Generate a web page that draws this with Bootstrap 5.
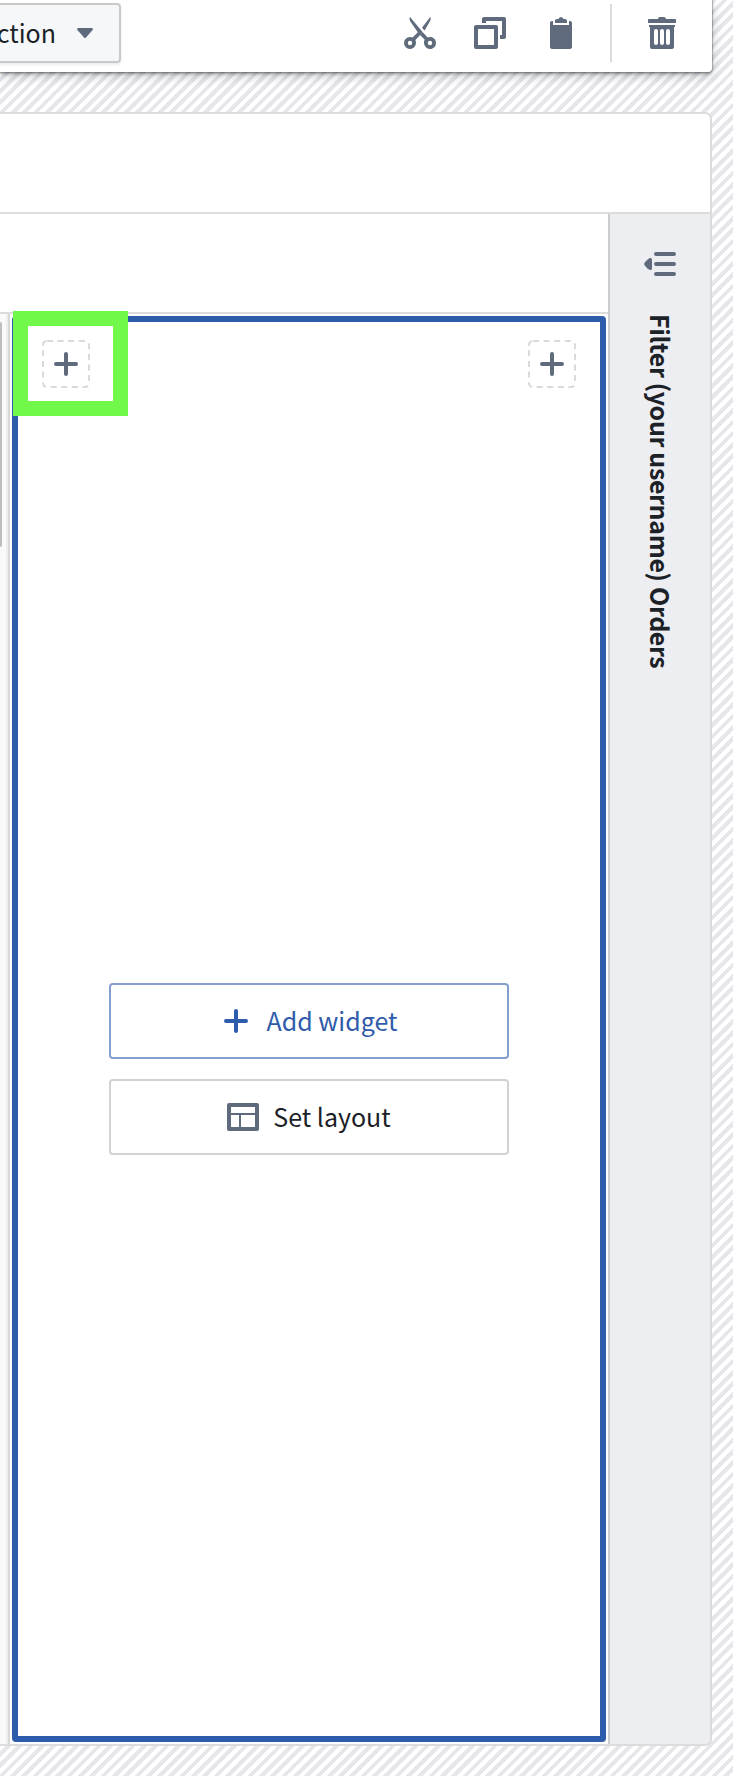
<!DOCTYPE html>
<html lang="en">
<head>
<meta charset="utf-8">
<meta name="viewport" content="width=device-width, initial-scale=1">
<title>Section editor</title>
<link href="https://cdn.jsdelivr.net/npm/bootstrap@5.3.0/dist/css/bootstrap.min.css" rel="stylesheet">
<style>
  :root { --ink: #1c2127; --icon: #5f6b7c; --line: #dcdcdd; --accent: #2f5bab; }
  body { font-family: "Noto Sans CJK JP", "Noto Sans", sans-serif; font-size: 25px; line-height: 36px; color: var(--ink); overflow: hidden; }
  svg { display: block; flex: none; fill: currentColor; }
  .workspace { height: 1776px; background: repeating-linear-gradient(135deg, #e5e7eb 0 2.6px, #fff 2.6px 6.6px, #e5e7eb 6.6px 8px); }
  .toolbar { width: 712px; height: 72px; padding-top: 3px; border-radius: 0 0 4px 0; color: var(--icon);
    box-shadow: 0 0 0 1px rgba(17,20,24,.18), 0 2px 3px rgba(17,20,24,.35), 0 4px 12px rgba(17,20,24,.2); }
  .btn { --bs-btn-font-size: 25px; --bs-btn-line-height: 36px; --bs-btn-border-width: 2px; --bs-btn-border-radius: 4px; --bs-btn-color: var(--ink); }
  .btn span { margin-top: -2px; }
  .section-btn { width: 125px; height: 60px; margin-left: -4px; padding: 0 26px 0 0; gap: 21px; background: #f6f7f9; border-color: #c8c9cb; box-shadow: 0 2px 3px rgba(17,20,24,.08); }
  .tools { padding: 14px 34px 0 0; }
  .rule { width: 2px; height: 58px; margin: -13px 34px 0 33px; background: var(--line); }
  .canvas { width: 712px; height: 1634px; margin-top: 40px; border: 2px solid var(--line); border-left: 0; border-radius: 0 7px 7px 0; }
  .page-head { height: 100px; border-bottom: 2px solid var(--line); }
  .sub-head { height: 100px; border-bottom: 2px solid var(--line); }
  .main-col { width: 608px; }
  .side-col { width: 102px; border-left: 2px solid #caccd0; background: #edeef2; padding-top: 38px; color: var(--icon); }
  .side-title { writing-mode: vertical-rl; font-weight: 700; color: var(--ink); margin: 38px 0 0 2px; white-space: nowrap; letter-spacing: -.36px; }
  .prev-col { width: 10px; background: #fafafa; border-right: 2px solid #d8d8d8; box-shadow: inset -2px 0 #eee; padding-top: 8px; }
  .prev-card { width: 2px; height: 225px; background: #bdbdbd; border-radius: 0 2px 2px 0; }
  .selection { width: 594px; height: 1426px; margin: 2px 0 0 2px; border: 6px solid var(--accent); border-radius: 4px; }
  .slots { padding: 18px 24px 0; }
  .slot { width: 48px; height: 48px; color: var(--icon); }
  .slot-line { fill: none; stroke: #dadada; stroke-width: 2; stroke-dasharray: 6 4.6; }
  .highlight { top: -11px; left: -5px; width: 115px; height: 105px; border: 15px solid #72f74b; }
  .choices { padding: 595px 0 0 91px; gap: 20px; }
  .choice { width: 400px; height: 76px; padding: 0; gap: 14px; border-color: #d1d2d3; }
  .choice-main { --bs-btn-color: var(--accent); border-color: #849ed0; }
</style>
</head>
<body>
<div class="workspace">
  <header class="toolbar bg-white position-relative d-flex justify-content-between align-items-start">
    <button class="btn section-btn d-flex align-items-center justify-content-end" type="button">
      <span>ction</span>
      <svg class="caret" width="16" height="10" viewBox="0 0 16 10" style="color:#5f6b7c"><path d="M1 0h14q1.500.8.600 2L9 9.500q-1 1-2 0L.4 2Q-.5.8 1 0z"/></svg>
    </button>
    <div class="tools d-flex align-items-start">
      <svg width="32" height="32" viewBox="0 0 16 16"><path fill-rule="evenodd" d="M13 10c-.4 0-.8.1-1.200.3L9.300 7.500 8 9l2.300 2.300c-.2.500-.3.900-.3 1.500 0 1.700 1.300 3.200 3 3.200s3-1.300 3-3-1.300-3-3-3zm0 4.100a1.100 1.100 0 1 1 0-2.200 1.100 1.100 0 0 1 0 2.200zM9.200 5.600l1.100 1.100 2.300-4C13.300 1.700 13.600.6 13.100 0L9 5.400zM3 0c-.5.6-.2 1.700.5 2.700l3.400 4.900-2.600 2.700C3.900 10.100 3.400 10 3 10a3 3 0 1 0 3 3c0-.6-.1-1-.3-1.500L8.100 9l1.100-1.600L3 0zm0 14.100a1.100 1.100 0 1 1 0-2.200 1.100 1.100 0 0 1 0 2.200z"/></svg>
      <svg width="32" height="32" viewBox="0 0 16 16" style="margin-left:38px"><path fill-rule="evenodd" d="M15 0H5c-.55 0-1 .45-1 1v2h2V2h8v7h-1v2h2c.55 0 1-.45 1-1V1c0-.55-.45-1-1-1zm-4 4H1c-.55 0-1 .45-1 1v10c0 .55.45 1 1 1h10c.55 0 1-.45 1-1V5c0-.55-.45-1-1-1zm-1 10H2V6h8v8z"/></svg>
      <svg width="32" height="32" viewBox="0 0 16 16" style="margin-left:39px"><path d="M11 2c0-.55-.45-1-1-1h-.78C8.980.400 8.400 0 8 0S7 .400 6.780 1H6c-.55 0-1 .45-1 1v1h6V2zM12.500 2H12v2H4V2h-.5c-.55 0-1 .45-1 1v12c0 .55.45 1 1 1h9c.55 0 1-.45 1-1V3c0-.55-.45-1-1-1z"/></svg>
      <div class="rule"></div>
      <svg width="32" height="32" viewBox="0 0 16 16"><path fill-rule="evenodd" d="M14.500 1H10c0-.55-.45-1-1-1H7c-.55 0-1 .45-1 1H1.500c-.3 0-.5.200-.5.500V3h14V1.500c0-.3-.2-.5-.5-.5zM1.500 4v1H2v10c0 .55.45 1 1 1h10c.55 0 1-.45 1-1V5h.5V4h-13zM6 13c0 .55-.45 1-1 1s-1-.45-1-1V7c0-.55.45-1 1-1s1 .45 1 1v6zm3 0c0 .55-.45 1-1 1s-1-.45-1-1V7c0-.55.45-1 1-1s1 .45 1 1v6zm3 0c0 .55-.45 1-1 1s-1-.45-1-1V7c0-.55.45-1 1-1s1 .45 1 1v6z"/></svg>
    </div>
  </header>

  <main class="canvas bg-white d-flex flex-column overflow-hidden">
    <div class="page-head flex-shrink-0"></div>
    <div class="d-flex flex-grow-1">
      <div class="main-col d-flex flex-column">
        <div class="sub-head flex-shrink-0"></div>
        <div class="d-flex flex-grow-1">
          <div class="prev-col"><div class="prev-card"></div></div>
          <section class="selection">
            <div class="slots d-flex justify-content-between position-relative">
              <svg class="slot" viewBox="0 0 48 48"><rect class="slot-line" x="1" y="1" width="46" height="46" rx="4"/><path d="M22 22v-8a2 2 0 0 1 4 0v8h8a2 2 0 0 1 0 4h-8v8a2 2 0 0 1-4 0v-8h-8a2 2 0 0 1 0-4z"/></svg>
              <svg class="slot" viewBox="0 0 48 48"><rect class="slot-line" x="1" y="1" width="46" height="46" rx="4"/><path d="M22 22v-8a2 2 0 0 1 4 0v8h8a2 2 0 0 1 0 4h-8v8a2 2 0 0 1-4 0v-8h-8a2 2 0 0 1 0-4z"/></svg>
              <div class="highlight position-absolute"></div>
            </div>
            <div class="choices d-flex flex-column">
              <button class="btn choice choice-main d-flex align-items-center justify-content-center" type="button">
                <svg width="32" height="32" viewBox="9 8 32 32"><path d="M22 22v-8a2 2 0 0 1 4 0v8h8a2 2 0 0 1 0 4h-8v8a2 2 0 0 1-4 0v-8h-8a2 2 0 0 1 0-4z"/></svg>
                <span>Add widget</span>
              </button>
              <button class="btn choice d-flex align-items-center justify-content-center" type="button">
                <svg width="32" height="28" viewBox="0 0 32 28" style="color:#5f6b7c"><path fill-rule="evenodd" d="M2 0h28q2 0 2 2v24q0 2-2 2H2q-2 0-2-2V2q0-2 2-2zm2 4v6h24V4zm0 8v12h8V12zm10 0v12h14V12z"/></svg>
                <span>Set layout</span>
              </button>
            </div>
          </section>
        </div>
      </div>
      <aside class="side-col d-flex flex-column align-items-center">
        <svg width="32" height="24" viewBox="0 0 32 24"><path d="M12 0h18a2 2 0 0 1 0 4H12a2 2 0 0 1 0-4zm0 10h18a2 2 0 0 1 0 4H12a2 2 0 0 1 0-4zm0 10h18a2 2 0 0 1 0 4H12a2 2 0 0 1 0-4zM8 7.500v9q0 1.800-2 1.500Q4 17.500.7 13.500q-1-1.500 0-3Q4 6.500 6 6q2-.300 2 1.500z"/></svg>
        <div class="side-title">Filter (your username) Orders</div>
      </aside>
    </div>
  </main>
</div>
<script src="https://cdn.jsdelivr.net/npm/bootstrap@5.3.0/dist/js/bootstrap.bundle.min.js"></script>
</body>
</html>
